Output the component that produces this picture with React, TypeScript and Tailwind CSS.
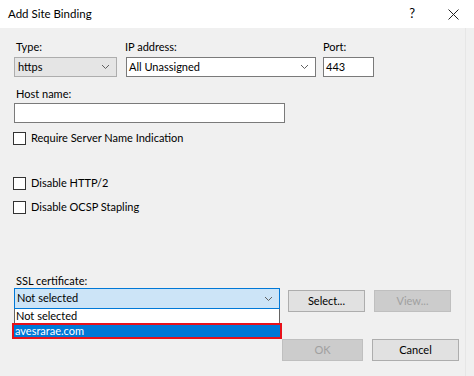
import React from "react";

function Chevron({ className = "" }: { className?: string }) {
  return (
    <svg width="9" height="6" viewBox="0 0 9 6" className={className}>
      <path d="M1 1 L4.5 4.5 L8 1" fill="none" stroke="#606060" strokeWidth="1" />
    </svg>
  );
}

function Check({ label, className = "" }: { label: string; className?: string }) {
  return (
    <div className={`flex items-center h-[16px] ${className}`}>
      <div className="w-[13px] h-[13px] border border-[#333333] bg-white ml-[-1px]" />
      <span className="ml-[5px] text-black">{label}</span>
    </div>
  );
}

export default function App() {
  return (
    <div
      className="w-[474px] h-[376px] bg-[#f0f0f0] overflow-hidden text-[11px] text-black relative"
      style={{ fontFamily: 'Lato, "Noto Sans", sans-serif' }}
    >
      {/* Title bar */}
      <div className="h-[28px] bg-white flex items-center pl-[8px]">
        <span className="text-[11.5px]">Add Site Binding</span>
        <span className="ml-auto text-[13px] mr-[33px]">?</span>
        <svg width="11" height="11" viewBox="0 0 11 11" className="mr-[15px]">
          <path d="M0.5 0.5 L10.5 10.5 M10.5 0.5 L0.5 10.5" stroke="#222" strokeWidth="1" />
        </svg>
      </div>

      <div className="pl-[14px] pt-[11px] border-r border-[#e6e6e6] mr-[8px] h-[348px]">
        {/* Type / IP / Port */}
        <div className="flex">
          <div className="w-[103px] flex flex-col">
            <span className="h-[16px] leading-[16px] pl-[2px]">Type:</span>
            <div className="mt-[2px] h-[20px] bg-[#e5e5e5] border border-[#adadad] flex items-center pl-[3px] pr-[6px]">
              <span>https</span>
              <Chevron className="ml-auto" />
            </div>
          </div>
          <div className="w-[190px] ml-[9px] flex flex-col">
            <span className="h-[16px] leading-[16px] ml-[-1px]">IP address:</span>
            <div className="mt-[2px] h-[20px] bg-white border border-[#7a7a7a] flex items-center pl-[2px] pr-[6px]">
              <span>All Unassigned</span>
              <Chevron className="ml-auto" />
            </div>
          </div>
          <div className="w-[51px] ml-[7px] flex flex-col">
            <span className="h-[16px] leading-[16px]">Port:</span>
            <div className="mt-[2px] h-[20px] bg-white border border-[#7a7a7a] flex items-center pl-[2px]">
              <span>443</span>
            </div>
          </div>
        </div>

        {/* Host name */}
        <div className="mt-[9px] flex flex-col w-[271px]">
          <span className="h-[16px] leading-[16px] pl-[2px]">Host name:</span>
          <div className="mt-[1px] h-[20px] bg-white border border-[#7a7a7a]" />
        </div>

        <Check label="Require Server Name Indication" className="mt-[7px]" />
        <Check label="Disable HTTP/2" className="mt-[29px]" />
        <Check label="Disable OCSP Stapling" className="mt-[8px]" />

        {/* SSL certificate */}
        <div className="mt-[58px] h-[16px] leading-[16px] pl-[2px]">SSL certificate:</div>
        <div className="flex mt-[-1px]">
          <div className="relative w-[266px]">
            <div className="h-[21px] bg-[#cce4f7] border border-[#0078d7] flex items-center pl-[2px] pr-[6px]">
              <span>Not selected</span>
              <Chevron className="ml-auto" />
            </div>
            <div className="absolute left-0 top-[21px] w-[266px] z-10">
              <div className="h-[14px] leading-[13px] bg-white border-x border-[#646464] pl-[1px]">Not selected</div>
              <div className="ml-[-2px] w-[270px] h-[16px] border-2 border-[#e8111a] bg-[#0078d7] text-white leading-[12px] pl-[1px]">
                avesrarae.com
              </div>
            </div>
          </div>
          <div className="ml-[8px] mt-[2px] w-[77px] h-[22px] bg-[#e1e1e1] border border-[#adadad] flex items-center justify-center">
            Select...
          </div>
          <div className="ml-[9px] mt-[2px] w-[77px] h-[22px] bg-[#cccccc] border border-[#bfbfbf] text-[#a0a0a0] flex items-center justify-center">
            View...
          </div>
        </div>

        {/* OK / Cancel */}
        <div className="flex mt-[27px] pl-[268px]">
          <div className="w-[81px] h-[22px] bg-[#cccccc] border border-[#bfbfbf] text-[#a0a0a0] flex items-center justify-center">
            OK
          </div>
          <div className="ml-[9px] w-[87px] h-[22px] bg-[#e1e1e1] border border-[#adadad] flex items-center justify-center">
            Cancel
          </div>
        </div>
      </div>
    </div>
  );
}
